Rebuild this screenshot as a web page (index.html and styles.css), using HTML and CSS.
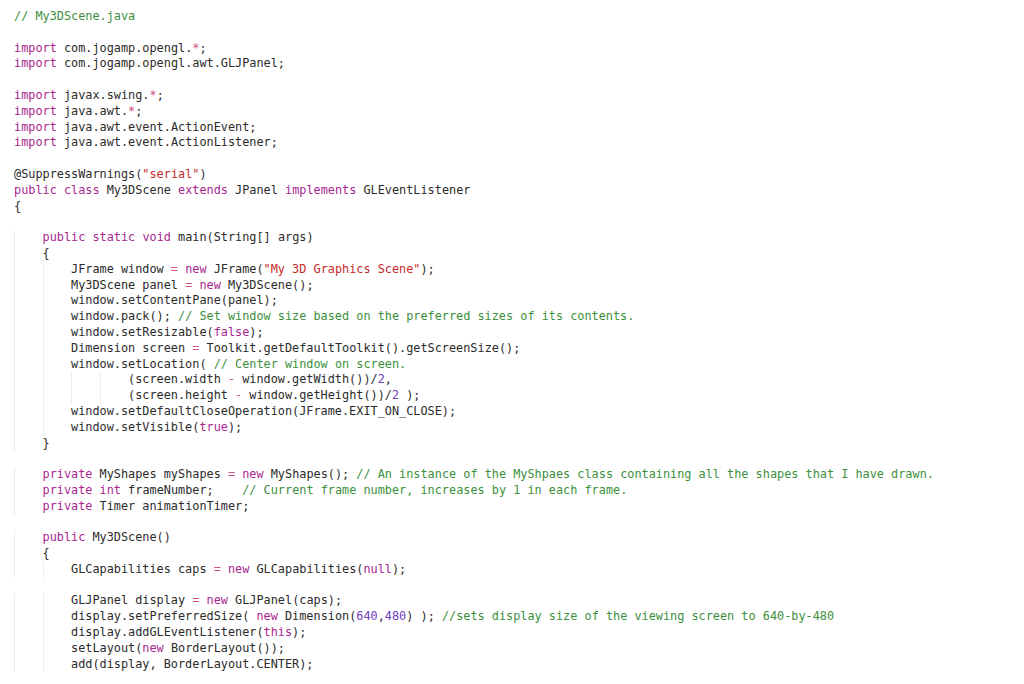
FILE: index.html
```html
<!DOCTYPE html>
<html>
<head>
<meta charset="utf-8">
<link rel="stylesheet" href="styles.css">
</head>
<body>
<div class="code">
<div class="ln"><span class="c">// My3DScene.java</span></div>
<div class="ln"></div>
<div class="ln"><span class="k">import</span> com.jogamp.opengl.<span class="o">*</span>;</div>
<div class="ln"><span class="k">import</span> com.jogamp.opengl.awt.GLJPanel;</div>
<div class="ln"></div>
<div class="ln"><span class="k">import</span> javax.swing.<span class="o">*</span>;</div>
<div class="ln"><span class="k">import</span> java.awt.<span class="o">*</span>;</div>
<div class="ln"><span class="k">import</span> java.awt.event.ActionEvent;</div>
<div class="ln"><span class="k">import</span> java.awt.event.ActionListener;</div>
<div class="ln"></div>
<div class="ln">@SuppressWarnings(<span class="s">"serial"</span>)</div>
<div class="ln"><span class="k">public</span> <span class="k">class</span> My3DScene <span class="k">extends</span> JPanel <span class="k">implements</span> GLEventListener</div>
<div class="ln">{</div>
<div class="ln"></div>
<div class="ln"><span class="i"></span><span class="k">public</span> <span class="k">static</span> <span class="k">void</span> main(String[] args)</div>
<div class="ln"><span class="i"></span>{</div>
<div class="ln"><span class="i"></span><span class="i"></span>JFrame window <span class="o">=</span> <span class="k">new</span> JFrame(<span class="s">"My 3D Graphics Scene"</span>);</div>
<div class="ln"><span class="i"></span><span class="i"></span>My3DScene panel <span class="o">=</span> <span class="k">new</span> My3DScene();</div>
<div class="ln"><span class="i"></span><span class="i"></span>window.setContentPane(panel);</div>
<div class="ln"><span class="i"></span><span class="i"></span>window.pack(); <span class="c">// Set window size based on the preferred sizes of its contents.</span></div>
<div class="ln"><span class="i"></span><span class="i"></span>window.setResizable(<span class="k">false</span>);</div>
<div class="ln"><span class="i"></span><span class="i"></span>Dimension screen <span class="o">=</span> Toolkit.getDefaultToolkit().getScreenSize();</div>
<div class="ln"><span class="i"></span><span class="i"></span>window.setLocation( <span class="c">// Center window on screen.</span></div>
<div class="ln"><span class="i"></span><span class="i"></span><span class="i"></span><span class="i"></span>(screen.width <span class="o">-</span> window.getWidth())/<span class="n">2</span>,</div>
<div class="ln"><span class="i"></span><span class="i"></span><span class="i"></span><span class="i"></span>(screen.height <span class="o">-</span> window.getHeight())/<span class="n">2</span> );</div>
<div class="ln"><span class="i"></span><span class="i"></span>window.setDefaultCloseOperation(JFrame.EXIT_ON_CLOSE);</div>
<div class="ln"><span class="i"></span><span class="i"></span>window.setVisible(<span class="k">true</span>);</div>
<div class="ln"><span class="i"></span>}</div>
<div class="ln"></div>
<div class="ln"><span class="i"></span><span class="k">private</span> MyShapes myShapes <span class="o">=</span> <span class="k">new</span> MyShapes(); <span class="c">// An instance of the MyShpaes class containing all the shapes that I have drawn.</span></div>
<div class="ln"><span class="i"></span><span class="k">private</span> <span class="k">int</span> frameNumber;    <span class="c">// Current frame number, increases by 1 in each frame.</span></div>
<div class="ln"><span class="i"></span><span class="k">private</span> Timer animationTimer;</div>
<div class="ln"></div>
<div class="ln"><span class="i"></span><span class="k">public</span> My3DScene()</div>
<div class="ln"><span class="i"></span>{</div>
<div class="ln"><span class="i"></span><span class="i"></span>GLCapabilities caps <span class="o">=</span> <span class="k">new</span> GLCapabilities(<span class="k">null</span>);</div>
<div class="ln"></div>
<div class="ln"><span class="i"></span><span class="i"></span>GLJPanel display <span class="o">=</span> <span class="k">new</span> GLJPanel(caps);</div>
<div class="ln"><span class="i"></span><span class="i"></span>display.setPreferredSize( <span class="k">new</span> Dimension(<span class="n">640</span>,<span class="n">480</span>) ); <span class="c">//sets display size of the viewing screen to 640-by-480</span></div>
<div class="ln"><span class="i"></span><span class="i"></span>display.addGLEventListener(<span class="k">this</span>);</div>
<div class="ln"><span class="i"></span><span class="i"></span>setLayout(<span class="k">new</span> BorderLayout());</div>
<div class="ln"><span class="i"></span><span class="i"></span>add(display, BorderLayout.CENTER);</div>
</div>
</body>
</html>
```

FILE: styles.css
```css
html, body {
  margin: 0;
  padding: 0;
  background: #ffffff;
}

.code {
  padding: 9px 0 0 14px;
  font-family: "DejaVu Sans Mono", "Liberation Mono", monospace;
  font-size: 11.85px;
  color: #2b2b2b;
}

.ln {
  height: 15.8px;
  line-height: 15.8px;
  white-space: pre;
}

.i {
  display: inline-block;
  vertical-align: top;
  box-sizing: border-box;
  width: 4ch;
  height: 15.8px;
  border-left: 1px solid #ececec;
}

.k { color: #a8278f; }
.c { color: #3c8f3c; }
.s { color: #c62a2a; }
.n { color: #7040c0; }
.o { color: #d2508a; }
```
